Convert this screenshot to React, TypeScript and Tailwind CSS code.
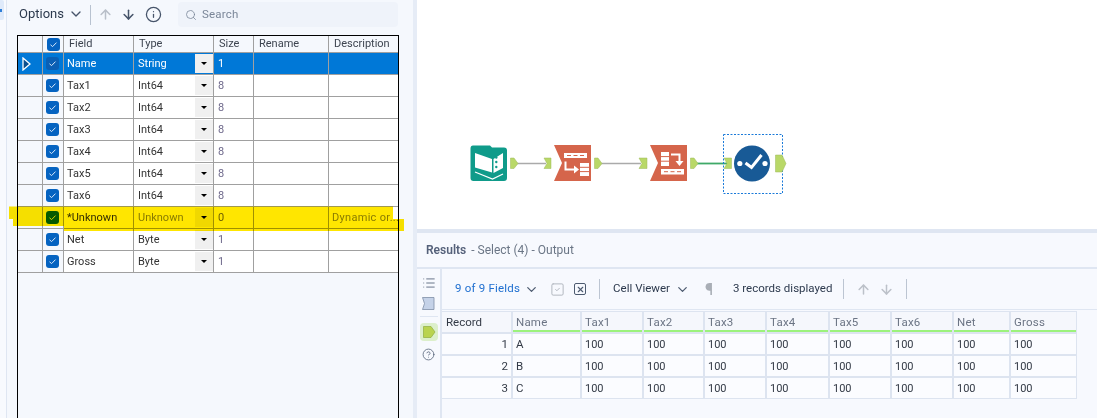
import { ArrowDown, ArrowUp, ChevronDown, CircleHelp, Info, List, Search, SquareCheck, X } from 'lucide-react';

const fields = [
  { name: 'Name', type: 'String', size: '1', selected: true },
  { name: 'Tax1', type: 'Int64', size: '8' },
  { name: 'Tax2', type: 'Int64', size: '8' },
  { name: 'Tax3', type: 'Int64', size: '8' },
  { name: 'Tax4', type: 'Int64', size: '8' },
  { name: 'Tax5', type: 'Int64', size: '8' },
  { name: 'Tax6', type: 'Int64', size: '8' },
  { name: '*Unknown', type: 'Unknown', size: '0', description: 'Dynamic or...', muted: true },
  { name: 'Net', type: 'Byte', size: '1' },
  { name: 'Gross', type: 'Byte', size: '1' },
];

const resultColumns = ['Name', 'Tax1', 'Tax2', 'Tax3', 'Tax4', 'Tax5', 'Tax6', 'Net', 'Gross'];
const resultRows = [
  ['1', 'A'],
  ['2', 'B'],
  ['3', 'C'],
];

const Checkbox = ({ dark }: { dark?: boolean }) => (
  <div className={`flex h-[13px] w-[13px] items-center justify-center rounded-[3px] ${dark ? 'bg-[#0a5fb4]' : 'bg-[#0563c1]'}`}>
    <svg viewBox="0 0 9 9" className="h-[9px] w-[9px]" fill="none" stroke="#dbe9fa" strokeWidth="1">
      <path d="M1.5 4.8 L3.6 6.6 L7.5 2.6" />
    </svg>
  </div>
);

const FieldRow = ({ field }: { field: (typeof fields)[number] }) => {
  const rowClass = field.selected ? 'bg-[#0078d7] text-white' : 'bg-white text-[#333333]';
  const muted = field.muted ? 'text-[#8a8a8a]' : '';
  return (
    <div className={`flex h-[22px] border-b border-[#a0a0a0] text-[11px] leading-[21px] ${rowClass}`}>
      <div className={`flex w-[25px] shrink-0 items-center justify-start border-r border-[#a0a0a0] pl-[4px] ${field.selected ? '' : 'bg-[#f5f8fd]'}`}>
        {field.selected && (
          <svg viewBox="0 0 9 14" className="h-[14px] w-[9px]" fill="#0b4f8f" stroke="#ffffff" strokeWidth="1.3">
            <path d="M1 1 L8 7 L1 13 Z" />
          </svg>
        )}
      </div>
      <div className={`flex w-[21px] shrink-0 items-center justify-start border-r border-[#a0a0a0] pl-[3px] ${field.selected ? '' : 'bg-[#f5f8fd]'}`}>
        <Checkbox dark={field.selected} />
      </div>
      <div className="w-[70px] shrink-0 border-r border-[#a0a0a0] pl-[3px]">{field.name}</div>
      <div className={`relative w-[80px] shrink-0 border-r border-[#a0a0a0] pl-[4px] ${muted}`}>
        {field.type}
        <div className="absolute right-0 top-px flex h-[19px] w-[18px] items-center justify-center bg-[#f0f0f0]">
          <div className="h-0 w-0 border-x-[3px] border-t-[3px] border-x-transparent border-t-black" />
        </div>
      </div>
      <div className={`w-[40px] shrink-0 border-r border-[#a0a0a0] pl-[4px] ${field.selected ? '' : 'text-[#6f6a8c]'}`}>{field.size}</div>
      <div className="w-[75px] shrink-0 border-r border-[#a0a0a0]" />
      <div className="flex-1 whitespace-nowrap pl-[3px] tracking-[0.3px] text-[#8a8a8a]">{field.description}</div>
    </div>
  );
};

const ConfigPanel = () => (
  <div className="flex h-full w-[413px] shrink-0 bg-[#f5f8fd]">
    <div className="relative w-[6px] shrink-0 bg-[#f8fafe]">
      <div className="flex h-[20px] w-[4px] items-center rounded-r-[2px] bg-[#dfeafa]">
        <div className="h-[3px] w-[2px] bg-[#2f7fd8]" />
      </div>
    </div>
    <div className="w-[1px] shrink-0 bg-[#dfe6f2]" />
    <div className="flex-1 pl-[10px]">
      <div className="flex h-[35px] items-start text-[#3c4a5e]">
        <div className="flex h-[28px] w-[73px] items-center pl-[2px] text-[13px] text-[#2c3a4e]">
          Options
          <ChevronDown className="ml-[4px] h-[16px] w-[16px] text-[#46546a]" strokeWidth={2} />
        </div>
        <div className="mt-[5px] h-[20px] w-px bg-[#b8c2d0]" />
        <ArrowUp className="ml-[7px] mt-[7px] h-[15px] w-[15px] text-[#b9bfc9]" strokeWidth={2.4} />
        <ArrowDown className="ml-[8px] mt-[7px] h-[15px] w-[15px] text-[#46546a]" strokeWidth={2.4} />
        <Info className="ml-[9px] mt-[6px] h-[17px] w-[17px] text-[#46546a]" strokeWidth={1.8} />
        <div className="ml-[16px] mt-[2px] flex h-[25px] w-[220px] items-center rounded-[4px] bg-[#eff3fa] pl-[7px] text-[11.5px] tracking-[0.2px] text-[#7a8698]">
          <Search className="mr-[5px] h-[12px] w-[12px] text-[#7a8698]" strokeWidth={1.6} />
          Search
        </div>
      </div>
      <div className="h-[383px] w-[382px] border-x border-t border-black">
        <div className="flex h-[17px] border-b border-[#a0a0a0] bg-[#f5f8fd] text-[11px] leading-[15px] text-[#3d4450]">
          <div className="w-[25px] shrink-0 border-r border-[#a0a0a0]" />
          <div className="w-[21px] shrink-0 border-r border-[#a0a0a0] pl-[4px] pt-[2px]">
            <Checkbox />
          </div>
          <div className="w-[70px] shrink-0 border-r border-[#a0a0a0] pl-[5px]">Field</div>
          <div className="w-[80px] shrink-0 border-r border-[#a0a0a0] pl-[5px]">Type</div>
          <div className="w-[40px] shrink-0 border-r border-[#a0a0a0] pl-[5px]">Size</div>
          <div className="w-[75px] shrink-0 border-r border-[#a0a0a0] pl-[5px]">Rename</div>
          <div className="flex-1 pl-[5px]">Description</div>
        </div>
        {fields.map((field) => (
          <FieldRow key={field.name} field={field} />
        ))}
      </div>
    </div>
  </div>
);

const Workflow = () => (
  <svg viewBox="470 134 320 62" className="absolute left-[53px] top-[134px] h-[62px] w-[320px]">
    {/* connections */}
    <path d="M517 163.5 H546 M601 163.5 H641" stroke="#aaaaaa" strokeWidth="1.6" fill="none" />
    <path d="M697 163.5 H727" stroke="#3fa968" strokeWidth="1.8" fill="none" />

    {/* input tool */}
    <path d="M473 145.5 H490 L492 147.5 H504 Q507 147.5 507 150.5 V178 Q507 181 504 181 H473.5 Q470.5 181 470.5 178 V148.5 Q470.5 145.5 473 145.5 Z" fill="#0f9b8a" />
    <path d="M475 153 L492 159 V172.5 L475 167.5 Z M493.5 159 L503 153 V168 L493.5 173 Z" fill="#ffffff" />
    <path d="M475 172 L492.5 179 L503 174" stroke="#ffffff" strokeWidth="1.2" fill="none" />
    <circle cx="496.3" cy="157.5" r="1.2" fill="#0f9b8a" />
    <circle cx="496.3" cy="162" r="1.2" fill="#0f9b8a" />
    <circle cx="496.3" cy="167" r="1.2" fill="#0f9b8a" />

    {/* arrange tools */}
    <path d="M554 145 H591 V181 H554 L562 163 Z" fill="#d5654b" />
    <path d="M564 153 H587 V158 H564 Z M580 163 H589 V176 H580 Z" fill="#ffffff" />
    <path d="M567 155.5 H571 M573.5 155.5 H577.5 M580 155.5 H584 M580 167.3 H589 M580 171.6 H589" stroke="#d5654b" strokeWidth="1" />
    <path d="M565.5 161.5 V169.5 H575" stroke="#ffffff" strokeWidth="2" fill="none" />
    <path d="M574 165.5 L579 169.5 L574 173.5 Z" fill="#ffffff" />

    <path d="M650 145 H687 V181 H650 L658 163 Z" fill="#d5654b" />
    <path d="M661 152 H669 V166 H661 Z M661 169 H684 V174.5 H661 Z" fill="#ffffff" />
    <path d="M661 156.6 H669 M661 161.2 H669 M664 171.7 H668 M670.5 171.7 H674.5 M677 171.7 H681" stroke="#d5654b" strokeWidth="1" />
    <path d="M671 154.5 H679.5 V161.5" stroke="#ffffff" strokeWidth="2" fill="none" />
    <path d="M675.5 161 L679.5 166 L683.5 161 Z" fill="#ffffff" />

    {/* select tool */}
    <rect x="723.5" y="134.5" width="59" height="59" fill="none" stroke="#1a7ad9" strokeWidth="1" strokeDasharray="2 1.5" />
    <circle cx="752" cy="163.5" r="18" fill="#185a96" />
    <circle cx="739.8" cy="163.5" r="2.6" fill="#ffffff" />
    <circle cx="765" cy="163.5" r="2.6" fill="#ffffff" />
    <path d="M745.5 163 L751.5 167.5 L761.5 155" stroke="#ffffff" strokeWidth="3" fill="none" />

    {/* anchors */}
    <path d="M510.5 158 H514 L518 163.5 L514 168.5 H510.5 Z M594.5 158 H598 L602 163.5 L598 168.5 H594.5 Z M690.5 158 H694 L698 163.5 L694 168.5 H690.5 Z" fill="#b9d868" stroke="#9db85a" strokeWidth="0.5" />
    <path d="M544 158 H551 V168.5 H544 L547 163.5 Z M639 158 H647 V168.5 H639 L642 163.5 Z M724 158 H731.5 V168.5 H724 L727 163.5 Z" fill="#b9d868" stroke="#9db85a" strokeWidth="0.5" />
    <path d="M775.5 155 H782 L786 163.5 L782 172 H775.5 Z" fill="#b9d868" stroke="#9db85a" strokeWidth="0.5" />
  </svg>
);

const ResultsPanel = () => (
  <div className="flex h-[185px] flex-col bg-[#f7f9fe]">
    <div className="flex h-[36px] items-center border-b-[2px] border-[#dfe6f2] pl-[9px] text-[12px] text-[#6b7686]">
      <span className="font-semibold text-[#55617a]">Results</span>
      <span className="ml-[5px]">- Select (4) - Output</span>
    </div>
    <div className="flex flex-1">
      <div className="flex w-[25px] shrink-0 flex-col items-center border-r-[2px] border-[#dfe6f2] pt-[7px]">
        <List className="h-[14px] w-[14px] text-[#56647a]" strokeWidth={1.5} />
        <svg viewBox="0 0 13 13" className="mt-[7px] h-[13px] w-[13px]">
          <path d="M0.5 0.5 H12 V12.5 H0.5 L2.5 6.5 Z" fill="#c5d2e8" stroke="#7f8ea6" strokeWidth="0.8" />
        </svg>
        <div className="mt-[6px] h-px w-[18px] bg-[#dfe6f2]" />
        <div className="mt-[6px] flex h-[18px] w-[18px] items-center justify-center rounded-[4px] bg-[#dcefcb]">
          <svg viewBox="0 0 14 14" className="h-[14px] w-[14px]">
            <path d="M1.5 1.5 H9 L13 7 L9 12.5 H1.5 Z" fill="#b9d34f" stroke="#8fae3f" strokeWidth="0.7" />
          </svg>
        </div>
        <CircleHelp className="mt-[7px] h-[13px] w-[13px] text-[#56647a]" strokeWidth={1.5} />
      </div>
      <div className="flex-1">
        <div className="flex h-[41px] items-center border-b border-[#dfe6f2] pl-[13px] text-[11.5px] text-[#2d3a4e]">
          <span className="tracking-[0.2px] text-[#1f6fd0]">9 of 9 Fields</span>
          <ChevronDown className="ml-[4px] h-[15px] w-[15px] text-[#4d5b70]" strokeWidth={2} />
          <SquareCheck className="ml-[11px] h-[15px] w-[15px] text-[#b3b8c0]" strokeWidth={1.6} />
          <div className="ml-[9px] flex h-[12px] w-[12px] items-center justify-center rounded-[2px] border-[1.5px] border-[#4d5b70]">
            <X className="h-[9px] w-[9px] text-[#4d5b70]" strokeWidth={3} />
          </div>
          <div className="ml-[13px] h-[20px] w-px bg-[#bcc5d2]" />
          <span className="ml-[13px]">Cell Viewer</span>
          <ChevronDown className="ml-[5px] h-[15px] w-[15px] text-[#4d5b70]" strokeWidth={2} />
          <span className="ml-[15px] w-[11px] text-[17px] leading-none text-[#a9aeb6]">¶</span>
          <span className="ml-[17px]">3 records displayed</span>
          <div className="ml-[11px] h-[20px] w-px bg-[#bcc5d2]" />
          <ArrowUp className="ml-[12px] h-[15px] w-[15px] text-[#bcc1c9]" strokeWidth={2.4} />
          <ArrowDown className="ml-[8px] h-[15px] w-[15px] text-[#bcc1c9]" strokeWidth={2.4} />
          <div className="ml-[12px] h-[20px] w-px bg-[#bcc5d2]" />
        </div>
        <div className="mt-px w-[635px] border-b border-r border-[#dde4f0] bg-[#dde4f0] text-[11.5px] text-[#333a46]">
          <div className="grid grid-cols-[69px_67px_60px_59px_60px_61px_60px_60px_55px_65px] gap-[2px] pt-[1px]">
            <div className="h-[20px] bg-[#f5f7fc] pl-[4px] leading-[20px]">Record</div>
            {resultColumns.map((col) => (
              <div key={col} className="h-[20px] border-b-[2px] border-[#9cf27c] bg-[#f5f7fc] pl-[3px] leading-[20px] tracking-[0.2px] text-[#6b7484]">
                {col}
              </div>
            ))}
            {resultRows.map(([record, name]) => (
              <div key={record} className="contents">
                <div className="h-[20px] bg-[#fbfcff] pr-[3px] text-right leading-[21px]">{record}</div>
                <div className="h-[20px] bg-[#fbfcff] pl-[3px] leading-[21px]">{name}</div>
                {resultColumns.slice(1).map((col) => (
                  <div key={col} className="h-[20px] bg-[#fbfcff] pl-[3px] text-[11px] leading-[21px]">100</div>
                ))}
              </div>
            ))}
          </div>
        </div>
      </div>
    </div>
  </div>
);

const App = () => (
  <div className="relative flex h-[418px] w-[1097px] overflow-hidden bg-white" style={{ fontFamily: 'Roboto, "Noto Sans", sans-serif' }}>
    <ConfigPanel />
    <div className="w-[4px] shrink-0 bg-[#e6ecf6]" />
    <div className="flex flex-1 flex-col">
      <div className="relative h-[229px] bg-white">
        <Workflow />
      </div>
      <div className="h-[4px] bg-[#dfe6f2]" />
      <ResultsPanel />
    </div>
    {/* hand drawn highlighter over the *Unknown row */}
    <svg viewBox="0 200 410 40" className="absolute left-0 top-[200px] h-[40px] w-[410px] mix-blend-multiply">
      <path d="M9 206.5 H393 V219 H404 V231 H64 V226 H13 V219 H9 Z" fill="#ffe600" />
    </svg>
  </div>
);

export default App;
